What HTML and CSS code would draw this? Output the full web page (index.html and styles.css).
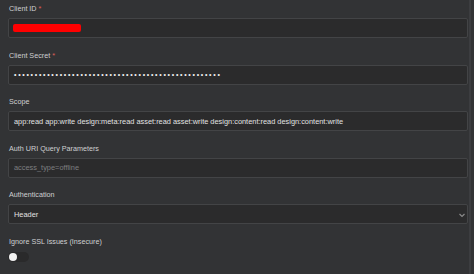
FILE: index.html
```html
<!DOCTYPE html>
<html>
  <head>
    <title>OAuth settings</title>
    <link rel="stylesheet" href="styles.css">
  </head>
  <body>
    <div class="formPanel">

      <div class="field">
        <div class="fieldLabel">Client ID <span class="req">*</span></div>
        <div class="fieldInput">
          <span class="redacted"></span>
        </div>
      </div>

      <div class="field">
        <div class="fieldLabel">Client Secret <span class="req">*</span></div>
        <div class="fieldInput">
          <span class="dots">••••••••••••••••••••••••••••••••••••••••••••••••••</span>
        </div>
      </div>

      <div class="field">
        <div class="fieldLabel">Scope</div>
        <div class="fieldInput">app:read app:write design:meta:read asset:read asset:write design:content:read design:content:write</div>
      </div>

      <div class="field">
        <div class="fieldLabel">Auth URI Query Parameters</div>
        <div class="fieldInput placeholder">access_type=offline</div>
      </div>

      <div class="field">
        <div class="fieldLabel">Authentication</div>
        <div class="fieldInput selectBox">
          <span>Header</span>
          <svg class="chevron" width="8" height="8" viewBox="0 0 8 8">
            <path d="M1.5 3 L4 5.5 L6.5 3" fill="none" stroke="#8a8a8a" stroke-width="1.2"/>
          </svg>
        </div>
      </div>

      <div class="field">
        <div class="fieldLabel">Ignore SSL Issues (Insecure)</div>
        <div class="toggle"><span class="knob"></span></div>
      </div>

    </div>
  </body>
</html>
```

FILE: styles.css
```css
  html, body {
    margin: 0;
    padding: 0;
    background-color: #323335;
  }

  .formPanel {
    width: 471px;
    height: 274px;
    padding: 3px 1px 0 8px;
    box-sizing: border-box;
    border-right: 2px solid #3c3d40;
    font-family: "Liberation Sans", "Inter", sans-serif;
  }

  .field {
    margin-bottom: 11.5px;
  }

  .fieldLabel {
    font-size: 7.2px;
    color: #cfd0d2;
    height: 12px;
    line-height: 12px;
    margin-bottom: 3px;
    padding-left: 1px;
  }

  .req {
    color: #e0605a;
  }

  .fieldInput {
    height: 20px;
    width: 100%;
    box-sizing: border-box;
    background-color: #2b2b2c;
    border: 1px solid #434446;
    border-radius: 2px;
    display: flex;
    align-items: center;
    padding-left: 5px;
    font-size: 7.4px;
    color: #e2e2e2;
    white-space: nowrap;
    overflow: hidden;
  }

  .placeholder {
    color: #7d7e80;
  }

  .redacted {
    display: inline-block;
    width: 68px;
    height: 8px;
    background-color: #ff0000;
    border-radius: 2px;
    margin-left: -1px;
  }

  .dots {
    font-size: 7px;
    letter-spacing: 1.7px;
    color: #f0f0f0;
  }

  .selectBox {
    justify-content: space-between;
    padding-right: 1px;
  }

  .chevron {
    margin-top: 1px;
  }

  .toggle {
    width: 21px;
    height: 10px;
    border-radius: 6px;
    background-color: #2a2a2b;
    display: flex;
    align-items: center;
    margin-top: 4px;
  }

  .knob {
    width: 8px;
    height: 8px;
    border-radius: 50%;
    background-color: #f2f2f2;
    margin-left: 1px;
  }
```
